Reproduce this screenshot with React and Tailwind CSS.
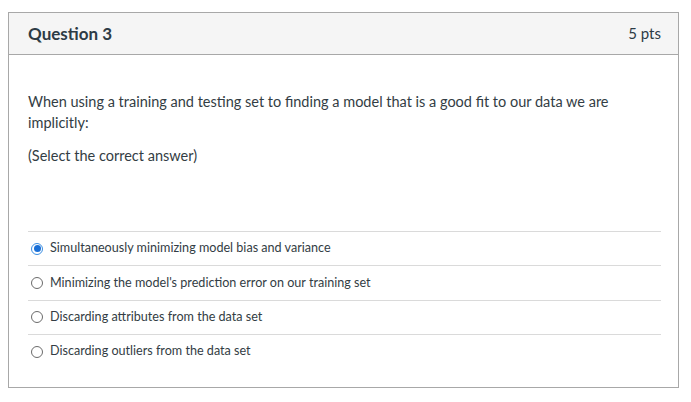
export default function App() {
  const answers = [
    'Simultaneously minimizing model bias and variance',
    "Minimizing the model's prediction error on our training set",
    'Discarding attributes from the data set',
    'Discarding outliers from the data set',
  ];

  return (
    <div className="min-h-[402px] bg-white pt-3 pl-2 pr-3 font-['Lato','Liberation_Sans',sans-serif] text-[#2d3b45]">
      <div className="w-[671px] border border-[#a8a8a8]">
        {/* Header */}
        <div className="flex h-[42px] items-center justify-between border-b border-[#a8a8a8] bg-[#f5f5f5] pl-[19px] pr-[17px]">
          <h2 className="text-[17px] font-bold text-[#2d3b45]">Question 3</h2>
          <span className="text-[15px] text-[#2d3b45]">5 pts</span>
        </div>

        {/* Body */}
        <div className="px-[19px] pt-[36px] pb-[19px] text-[#333d44]">
          <p className="text-[14.5px] leading-[21px]">
            When using a training and testing set to finding a model that is a good fit to our data we are implicitly:
          </p>
          <p className="mt-[12px] text-[14.5px] leading-[21px]">(Select the correct answer)</p>

          <div className="mt-[65px] mr-[-2px]">
            {answers.map((a, i) => (
              <label
                key={a}
                className="flex h-[34.3px] items-center gap-[7px] border-t border-[#dadada] pl-[3px] text-[12.6px]"
              >
                <span
                  className={`flex h-[12px] w-[12px] items-center justify-center rounded-full border ${
                    i === 0 ? 'border-[#3b8fe3] bg-white' : 'border-[#6b6b6b] bg-white'
                  }`}
                >
                  {i === 0 && <span className="h-[7px] w-[7px] rounded-full bg-[#1a6fd6]" />}
                </span>
                <span>{a}</span>
              </label>
            ))}
          </div>
        </div>
      </div>
    </div>
  );
}
